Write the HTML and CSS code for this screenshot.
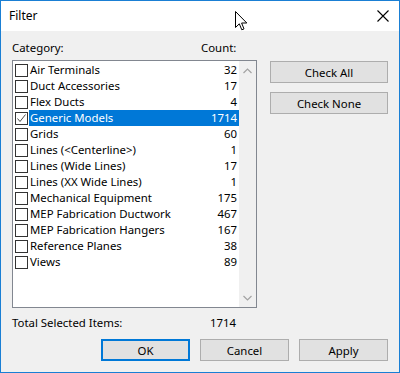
FILE: index.html
```html
<!DOCTYPE html>
<html lang="en">
<head>
  <meta charset="UTF-8">
  <title>Filter</title>
  <link rel="stylesheet" href="styles.css">
</head>
<body>
  <div class="window">
    <div class="titlebar">
      <span class="title">Filter</span>
      <span class="close">
        <svg width="12" height="12" viewBox="0 0 12 12"><path d="M0.5 0.5 L11.5 11.5 M11.5 0.5 L0.5 11.5" stroke="#000" stroke-width="1.1" fill="none"/></svg>
      </span>
    </div>

    <div class="content">
      <div class="main">
        <div class="left">
          <div class="labels">
            <span class="lbl-cat">Category:</span>
            <span class="lbl-count">Count:</span>
          </div>
          <div class="listbox">
            <div class="items" id="items"></div>
            <div class="scrollbar">
              <svg width="9" height="6" viewBox="0 0 9 6"><path d="M0.5 5 L4.5 1 L8.5 5" stroke="#a3a3a3" stroke-width="1.2" fill="none"/></svg>
              <svg width="9" height="6" viewBox="0 0 9 6"><path d="M0.5 1 L4.5 5 L8.5 1" stroke="#a3a3a3" stroke-width="1.2" fill="none"/></svg>
            </div>
          </div>
        </div>
        <div class="right">
          <button class="btn side-btn">Check All</button>
          <button class="btn side-btn">Check None</button>
        </div>
      </div>

      <div class="total">
        <span class="total-lbl">Total Selected Items:</span>
        <span class="total-val">1714</span>
      </div>

      <div class="actions">
        <button class="btn act-btn default">OK</button>
        <button class="btn act-btn">Cancel</button>
        <button class="btn act-btn">Apply</button>
      </div>
    </div>

    <svg class="cursor" width="13" height="21" viewBox="0 0 13 21">
      <path d="M0.5 0.5 L0.5 16.5 L4.3 12.8 L6.8 18.8 L9 17.9 L6.6 12 L11.8 12 Z" fill="#fff" stroke="#000" stroke-width="1" stroke-linejoin="miter"/>
    </svg>
  </div>

  <script>
const data = [
  ["Air Terminals", 32],
  ["Duct Accessories", 17],
  ["Flex Ducts", 4],
  ["Generic Models", 1714, true],
  ["Grids", 60],
  ["Lines (<Centerline>)", 1],
  ["Lines (Wide Lines)", 17],
  ["Lines (XX Wide Lines)", 1],
  ["Mechanical Equipment", 175],
  ["MEP Fabrication Ductwork", 467],
  ["MEP Fabrication Hangers", 167],
  ["Reference Planes", 38],
  ["Views", 89]
];

const items = document.getElementById("items");
data.forEach(([name, count, checked]) => {
  const row = document.createElement("div");
  row.className = "row" + (checked ? " selected" : "");
  const mark = checked
    ? '<svg width="11" height="11" viewBox="0 0 11 11"><path d="M1.5 5.5 L4 8.5 L9.5 1.5" stroke="#4d4d4d" stroke-width="1" fill="none"/></svg>'
    : "";
  row.innerHTML = `
    <span class="box">${mark}</span>
    <span class="cell">
      <span class="name"></span>
      <span class="count">${count}</span>
    </span>
  `;
  row.querySelector(".name").textContent = name;
  items.appendChild(row);
});
  </script>
</body>
</html>
```

FILE: styles.css
```css
body {
  margin: 0;
  padding: 0;
  font-family: "Noto Sans", "Liberation Sans", sans-serif;
  font-size: 11.4px;
  color: #000;
}

.window {
  position: relative;
  width: 400px;
  height: 373px;
  box-sizing: border-box;
  border: 1px solid #1a7fd4;
  background-color: #f0f0f0;
  overflow: hidden;
}

.titlebar {
  height: 30px;
  background-color: #fff;
  display: flex;
  align-items: center;
  justify-content: space-between;
  padding: 0 8px 0 8px;
}

.title {
  font-size: 12px;
  padding-bottom: 1px;
}

.close {
  display: flex;
  margin-right: 2px;
}

.content {
  padding: 9px 11px 0 11px;
}

.main {
  display: flex;
  gap: 13px;
}

.left {
  width: 246px;
}

.labels {
  display: flex;
  height: 20px;
  line-height: 15px;
}

.lbl-cat {
  width: 189px;
}

.listbox {
  display: flex;
  height: 246px;
  border: 1px solid #828790;
  background-color: #fff;
}

.items {
  flex: 1;
  padding-top: 1px;
}

.row {
  display: flex;
  align-items: center;
  height: 16px;
  padding-left: 2px;
}

.box {
  width: 11px;
  height: 11px;
  border: 1px solid #333;
  background-color: #fff;
  display: flex;
  flex-shrink: 0;
}

.cell {
  flex: 1;
  display: flex;
  justify-content: space-between;
  height: 16px;
  line-height: 16px;
  padding: 0 2px 0 1px;
  margin-left: 1px;
}

.selected .cell {
  background-color: #0078d7;
  color: #fff;
}

.scrollbar {
  width: 17px;
  background-color: #f0f0f0;
  display: flex;
  flex-direction: column;
  justify-content: space-between;
  align-items: center;
  padding: 7px 0 6px 0;
}

.right {
  display: flex;
  flex-direction: column;
  gap: 9px;
  padding-top: 21px;
}

.btn {
  font-family: inherit;
  font-size: 11.4px;
  background-color: #e1e1e1;
  border: 1px solid #adadad;
  color: #000;
  padding: 0;
  height: 22px;
  cursor: pointer;
}

.side-btn {
  width: 118px;
}

.total {
  display: flex;
  height: 29px;
  align-items: center;
  padding-bottom: 2px;
}

.total-lbl {
  width: 198px;
}

.actions {
  display: flex;
  justify-content: flex-end;
  gap: 10px;
}

.act-btn {
  width: 89px;
}

.default {
  border: 2px solid #0078d7;
}

.cursor {
  position: absolute;
  left: 234px;
  top: 10px;
}
```
